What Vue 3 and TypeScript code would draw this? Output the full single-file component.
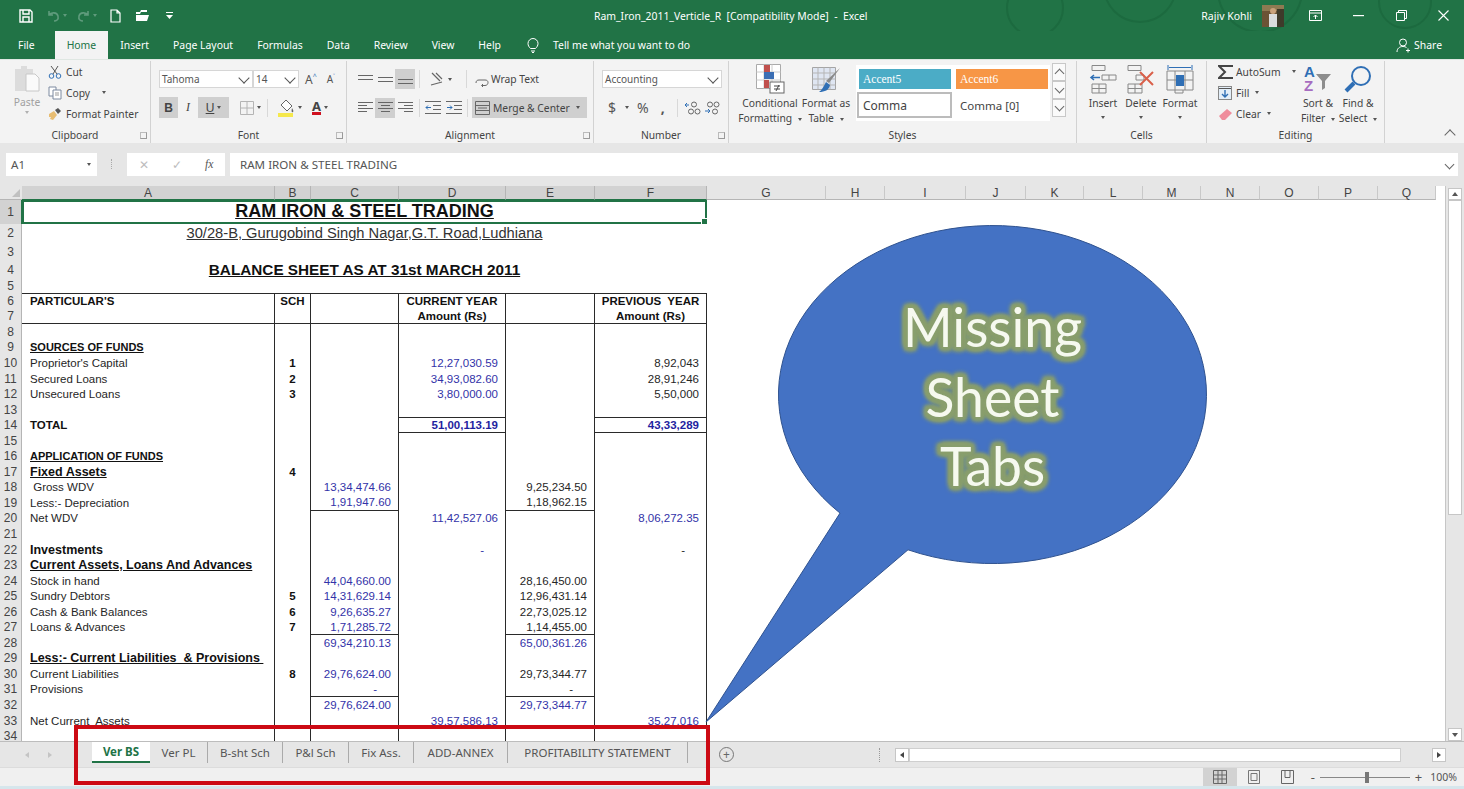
<script setup lang="ts">
import { computed } from 'vue'

type Col = 'a' | 'b' | 'c' | 'd' | 'e' | 'f'

interface Row {
  n: number
  h?: number
  title?: string
  titleClass?: string
  a?: string
  aClass?: string
  b?: string
  c?: string
  d?: string
  e?: string
  f?: string
  head?: boolean
  top?: boolean
  bottom?: boolean
  blue?: Col[]
  under?: Col[]
  boxed?: Col[]
  dash?: Col[]
}

const columns = [
  ['A', 253], ['B', 36], ['C', 88], ['D', 107], ['E', 89], ['F', 112],
  ['G', 119], ['H', 59], ['I', 81], ['J', 60], ['K', 58], ['L', 59],
  ['M', 58], ['N', 59], ['O', 59], ['P', 59], ['Q', 58],
] as const

const rows: Row[] = [
  { n: 1, h: 23.5, title: 'RAM IRON & STEEL TRADING', titleClass: 't-main' },
  { n: 2, h: 19.5, title: '30/28-B, Gurugobind Singh Nagar,G.T. Road,Ludhiana', titleClass: 't-sub' },
  { n: 3, h: 17 },
  { n: 4, h: 19, title: 'BALANCE SHEET AS AT 31st MARCH 2011', titleClass: 't-sheet' },
  { n: 5, h: 14 },
  { n: 6, a: "PARTICULAR'S", aClass: 'bold', b: 'SCH', d: 'CURRENT YEAR', f: 'PREVIOUS  YEAR', head: true, top: true },
  { n: 7, d: 'Amount (Rs)', f: 'Amount (Rs)', head: true, bottom: true },
  { n: 8 },
  { n: 9, a: 'SOURCES OF FUNDS', aClass: 'bold under caps' },
  { n: 10, a: "Proprietor's Capital", b: '1', d: '12,27,030.59', f: '8,92,043' },
  { n: 11, a: 'Secured Loans', b: '2', d: '34,93,082.60', f: '28,91,246' },
  { n: 12, a: 'Unsecured Loans', b: '3', d: '3,80,000.00', f: '5,50,000' },
  { n: 13 },
  { n: 14, a: 'TOTAL', aClass: 'bold', d: '51,00,113.19', f: '43,33,289', blue: ['f'], boxed: ['d', 'f'] },
  { n: 15 },
  { n: 16, a: 'APPLICATION OF FUNDS', aClass: 'bold under caps' },
  { n: 17, a: 'Fixed Assets', aClass: 'bold under mixed', b: '4' },
  { n: 18, a: ' Gross WDV', aClass: 'indent', c: '13,34,474.66', e: '9,25,234.50' },
  { n: 19, a: 'Less:- Depreciation', c: '1,91,947.60', e: '1,18,962.15', under: ['c', 'e'] },
  { n: 20, a: 'Net WDV', d: '11,42,527.06', f: '8,06,272.35', blue: ['f'] },
  { n: 21 },
  { n: 22, a: 'Investments', aClass: 'bold mixed', d: '-', f: '-', dash: ['d', 'f'] },
  { n: 23, a: 'Current Assets, Loans And Advances', aClass: 'bold under mixed' },
  { n: 24, a: 'Stock in hand', c: '44,04,660.00', e: '28,16,450.00' },
  { n: 25, a: 'Sundry Debtors', b: '5', c: '14,31,629.14', e: '12,96,431.14' },
  { n: 26, a: 'Cash & Bank Balances', b: '6', c: '9,26,635.27', e: '22,73,025.12' },
  { n: 27, a: 'Loans & Advances', b: '7', c: '1,71,285.72', e: '1,14,455.00', under: ['c', 'e'] },
  { n: 28, c: '69,34,210.13', e: '65,00,361.26', blue: ['e'] },
  { n: 29, a: 'Less:- Current Liabilities  & Provisions ', aClass: 'bold under mixed' },
  { n: 30, a: 'Current Liabilities', b: '8', c: '29,76,624.00', e: '29,73,344.77' },
  { n: 31, a: 'Provisions', c: '-', e: '-', dash: ['c', 'e'], under: ['c', 'e'] },
  { n: 32, c: '29,76,624.00', e: '29,73,344.77', blue: ['e'] },
  { n: 33, a: 'Net Current  Assets', d: '39,57,586.13', f: '35,27,016', blue: ['f'] },
  { n: 34 },
]

const gridStyle = computed(() => ({
  gridTemplateColumns: ['22px', ...columns.map(c => `${c[1]}px`)].join(' '),
  gridTemplateRows: ['14px', ...rows.map(r => `${r.h ?? 15.55}px`)].join(' '),
}))

const cols: Col[] = ['a', 'b', 'c', 'd', 'e', 'f']

function cellClass(row: Row, col: Col) {
  const isNum = col !== 'a' && col !== 'b'
  return [
    `col-${col}`,
    col === 'a' ? row.aClass : '',
    {
      head: row.head && col !== 'a',
      num: isNum && !row.head,
      sch: col === 'b',
      blue: (col === 'c' || col === 'd') || row.blue?.includes(col),
      'line-top': row.top,
      'line-bottom': row.bottom || row.under?.includes(col),
      boxed: row.boxed?.includes(col),
      dash: row.dash?.includes(col),
    },
  ]
}

const tabs = ['Ver BS', 'Ver PL', 'B-sht Sch', 'P&l Sch', 'Fix Ass.', 'ADD-ANNEX', 'PROFITABILITY STATEMENT']
const ribbonTabs = ['Insert', 'Page Layout', 'Formulas', 'Data', 'Review', 'View', 'Help']
</script>

<template>
  <div class="excel">
    <header class="titlebar">
      <svg class="doodle" width="460" height="31" viewBox="0 0 460 31" fill="none">
        <circle cx="35" cy="8" r="28" />
        <circle cx="140" cy="-14" r="36" />
        <circle cx="260" cy="-10" r="42" />
        <circle cx="405" cy="2" r="26" />
      </svg>
      <div class="qat">
        <svg width="14" height="14" viewBox="0 0 14 14" fill="none" stroke="#fff" stroke-width="1.4"><path d="M1 1h10l2 2v10H1zM4 1v4h6V1M4 13V8h6v5" /></svg>
        <svg class="undo" width="13" height="12" viewBox="0 0 13 12" fill="none" stroke="#5f9b7c" stroke-width="1.6"><path d="M2 1v4h4M2 5c2-3 8-3 9 1s-2 5-4 5" /></svg>
        <span class="qat-caret"></span>
        <svg class="redo" width="13" height="12" viewBox="0 0 13 12" fill="none" stroke="#5f9b7c" stroke-width="1.6"><path d="M11 1v4H7M11 5C9 2 3 2 2 6s2 5 4 5" /></svg>
        <span class="qat-caret"></span>
        <svg class="new-doc" width="11" height="14" viewBox="0 0 11 14" fill="none" stroke="#fff" stroke-width="1.2"><path d="M1 1h6l3 3v9H1zM7 1v3h3" /></svg>
        <svg class="open-doc" width="15" height="13" viewBox="0 0 15 13" fill="#fff"><path d="M1 3h4l1-2h6v2H6L5 5H1zM1 6h13l-2 6H1z" /></svg>
        <svg class="customize" width="9" height="9" viewBox="0 0 9 9" fill="#fff"><path d="M1 1h7v1H1zM1 4h7L4.500 8z" /></svg>
      </div>
      <div class="doc-title">Ram_Iron_2011_Verticle_R&nbsp; [Compatibility Mode]&nbsp; -&nbsp; Excel</div>
      <div class="win-area">
        <span class="user">Rajiv Kohli</span>
        <svg class="avatar" width="22" height="22" viewBox="0 0 22 22">
          <rect width="22" height="22" fill="#6b5335" />
          <rect x="0" y="0" width="22" height="6" fill="#8e7a52" />
          <rect x="15" y="4" width="7" height="18" fill="#3e3a2a" />
          <circle cx="11" cy="6" r="3" fill="#c9a27c" />
          <rect x="7" y="9" width="8" height="13" fill="#d9dcdd" />
        </svg>
        <svg class="win-display" width="13" height="11" viewBox="0 0 13 11" fill="none" stroke="#fff"><path d="M.5.500h12v10H.5zM.5 3h12M6.500 9V5M4.500 7l2-2 2 2" /></svg>
        <svg class="win-min" width="11" height="2" viewBox="0 0 11 2"><rect width="11" height="1.200" fill="#fff" /></svg>
        <svg class="win-max" width="11" height="11" viewBox="0 0 11 11" fill="none" stroke="#fff"><path d="M.5 2.500h8v8h-8zM2.500 2.500v-2h8v8h-2" /></svg>
        <svg class="win-close" width="11" height="11" viewBox="0 0 11 11" stroke="#fff" stroke-width="1.100"><path d="M.5.500l10 10M10.500.500l-10 10" /></svg>
      </div>
    </header>

    <nav class="ribbon-tabs">
      <span class="rtab">File</span>
      <span class="rtab active">Home</span>
      <span v-for="t in ribbonTabs" :key="t" class="rtab">{{ t }}</span>
      <svg class="bulb" width="12" height="15" viewBox="0 0 12 15" fill="none" stroke="#fff"><path d="M3.500 10.500C2 9 1 7.500 1 5.500a5 5 0 0 1 10 0c0 2-1 3.500-2.500 5zM4 13h4M5 14.500h2" /></svg>
      <span class="tell">Tell me what you want to do</span>
      <span class="share">
        <svg width="15" height="15" viewBox="0 0 15 15" fill="none" stroke="#fff"><circle cx="7" cy="4.500" r="3.500" /><path d="M1 14c0-3.500 2.500-5.500 6-5.500 1.500 0 2.500.3 3.500 1M10 12.500h4M12 10.500v4" /></svg>
        Share
      </span>
    </nav>

    <section class="ribbon">
      <div class="group g-clip">
        <div class="body clip-body">
          <div class="paste">
            <svg width="26" height="28" viewBox="0 0 26 28"><path d="M1 4h6V1h6v3h6v5h-7v17H1z" fill="#dcdcdc" /><path d="M12 9h9l4 4v13H12z" fill="#fafafa" stroke="#c8c8c8" /></svg>
            <span class="muted">Paste</span>
            <span class="mini-caret"></span>
          </div>
          <div class="clip-list">
            <div class="clip-row">
              <svg width="14" height="14" viewBox="0 0 14 14" fill="none" stroke="#555"><path d="M3 1l6 8M10 1L5 9" /><circle cx="3.500" cy="11" r="2.300" stroke="#2f6fb5" /><circle cx="10.500" cy="11" r="2.300" stroke="#2f6fb5" /></svg>
              Cut
            </div>
            <div class="clip-row">
              <svg width="14" height="14" viewBox="0 0 14 14" fill="#fff" stroke="#7c8aa0"><path d="M1 1h7v9H1z" /><path d="M5 4h8v9H5z" /><path d="M7 7h4M7 9h4" stroke="#999" /></svg>
              Copy <span class="mini-caret inline sp"></span>
            </div>
            <div class="clip-row">
              <svg width="14" height="14" viewBox="0 0 14 14"><path d="M1 7l5-3 3 4-4 5-3-1 1-2-2 0z" fill="#e8bd72" /><path d="M7 3l3-2 3 3-3 3z" fill="#555" /></svg>
              Format Painter
            </div>
          </div>
        </div>
        <div class="glabel">Clipboard</div>
        <span class="launcher"></span>
      </div>

      <div class="group g-font">
        <div class="body stack">
          <div class="tool-row">
            <div class="combo font-name">Tahoma<i class="chev"></i></div>
            <div class="combo font-size">14<i class="chev"></i></div>
            <span class="grow-a">A<sup>^</sup></span>
            <span class="shrink-a">A<sup>˅</sup></span>
          </div>
          <div class="tool-row second">
            <span class="tb b-btn pressed">B</span>
            <span class="tb i-btn">I</span>
            <span class="tb u-btn pressed"><u>U</u><span class="mini-caret inline"></span></span>
            <svg class="borders" width="14" height="14" viewBox="0 0 14 14" fill="none" stroke="#b4b4b4"><path d="M.5.500h13v13H.5zM7 .5v13M.5 7h13" /></svg>
            <span class="mini-caret inline"></span>
            <span class="vline"></span>
            <svg class="fill" width="17" height="18" viewBox="0 0 17 18"><path d="M8 1l6 6-5 5-6-6z" fill="#fff" stroke="#666" /><path d="M14 9c1 2 2 3 1 4s-2 0-1-4z" fill="#666" /><rect y="14" width="15" height="4" fill="#f5e84c" /></svg>
            <span class="mini-caret inline"></span>
            <span class="font-color">A</span>
            <span class="mini-caret inline"></span>
          </div>
        </div>
        <div class="glabel">Font</div>
        <span class="launcher"></span>
      </div>

      <div class="group g-align">
        <div class="body stack">
          <div class="tool-row">
            <span class="al"><svg width="15" height="9" viewBox="0 0 15 9" stroke="#666"><path d="M0 .5h15M0 4.500h15" /></svg></span>
            <span class="al"><svg width="15" height="9" viewBox="0 0 15 9" stroke="#666"><path d="M0 2.500h15M0 6.500h15" /></svg></span>
            <span class="al pressed"><svg width="15" height="9" viewBox="0 0 15 9" stroke="#666"><path d="M0 4.500h15M0 8.500h15" /></svg></span>
            <span class="vline sep4"></span>
            <svg class="orient" width="15" height="15" viewBox="0 0 15 15" fill="none" stroke="#666"><path d="M2 1l8 8M6 1l6 6M1 13l11-3" stroke-width="1.200" /></svg>
            <span class="mini-caret inline"></span>
            <span class="vline wide"></span>
            <svg class="wrap-ic" width="14" height="15" viewBox="0 0 14 15" fill="none" stroke="#666"><path d="M1 11c0-2 1-3 3-3h6c2 0 3 1 3 2.500s-1 3-3 3H7M8 12l-1.500 1.500L8 15" /></svg>
            <span class="txt">Wrap Text</span>
          </div>
          <div class="tool-row second">
            <span class="al"><svg width="15" height="11" viewBox="0 0 15 11" stroke="#666"><path d="M0 .5h15M0 3.500h9M0 6.500h15M0 9.500h9" /></svg></span>
            <span class="al pressed"><svg width="15" height="11" viewBox="0 0 15 11" stroke="#666"><path d="M0 .5h15M3 3.500h9M0 6.500h15M3 9.500h9" /></svg></span>
            <span class="al"><svg width="15" height="11" viewBox="0 0 15 11" stroke="#666"><path d="M0 .5h15M6 3.500h9M0 6.500h15M6 9.500h9" /></svg></span>
            <span class="vline sep4"></span>
            <svg class="ind" width="16" height="13" viewBox="0 0 16 13" fill="none" stroke="#666"><path d="M0 .5h16M8 4.500h8M8 8.500h8M0 12.500h16" /><path d="M6 6.500H1M3 4.500l-2 2 2 2" stroke="#2f6fb5" /></svg>
            <svg class="ind" width="16" height="13" viewBox="0 0 16 13" fill="none" stroke="#666"><path d="M0 .5h16M8 4.500h8M8 8.500h8M0 12.500h16" /><path d="M1 6.500h5M4 4.500l2 2-2 2" stroke="#2f6fb5" /></svg>
            <span class="vline wide2"></span>
            <span class="merge pressed">
              <svg width="15" height="14" viewBox="0 0 15 14" fill="none" stroke="#666"><path d="M.5.500h14v13H.5zM.5 4.500h14M.5 9.500h14M3 7h9" /></svg>
              Merge &amp; Center <span class="mini-caret inline"></span>
            </span>
          </div>
        </div>
        <div class="glabel">Alignment</div>
        <span class="launcher"></span>
      </div>

      <div class="group g-number">
        <div class="body stack">
          <div class="tool-row">
            <div class="combo fmt">Accounting<i class="chev"></i></div>
          </div>
          <div class="tool-row second num-tools">
            <span class="big-sym">$</span><span class="mini-caret inline dollar-caret"></span>
            <span class="big-sym pct">%</span>
            <span class="big-sym comma">,</span>
            <span class="vline num-sep"></span>
            <svg class="dec" width="16" height="14" viewBox="0 0 16 14" fill="none" stroke="#666"><path d="M4 4H0M2 2 0 4l2 2" stroke="#2f6fb5" /><circle cx="9" cy="3.500" r="2.500" /><circle cx="6" cy="10.500" r="2.500" /><circle cx="12.500" cy="10.500" r="2.500" /></svg>
            <svg class="dec next" width="16" height="14" viewBox="0 0 16 14" fill="none" stroke="#666"><circle cx="6" cy="3.500" r="2.500" /><circle cx="12.500" cy="3.500" r="2.500" /><circle cx="11" cy="10.500" r="2.500" /><path d="M1 10h5M4 8l2 2-2 2" stroke="#2f6fb5" /></svg>
          </div>
        </div>
        <div class="glabel">Number</div>
        <span class="launcher"></span>
      </div>

      <div class="group g-styles">
        <div class="body row-body">
          <div class="big cf">
            <svg width="29" height="30" viewBox="0 0 29 30">
              <path d="M.5.500h24v24H.5z" fill="#fff" stroke="#aaa" />
              <path d="M8 .5v24M16 .5v24M.5 8h24M.5 16h24" stroke="#ccc" />
              <rect x="8" y="1" width="6" height="7" fill="#c0504d" />
              <rect x="8" y="8" width="10" height="7" fill="#3c6fb4" />
              <rect x="8" y="16" width="5" height="8" fill="#c0504d" />
              <rect x="14" y="18" width="14" height="11" fill="#fff" stroke="#666" />
              <path d="M18 22h6M18 25h6M20 27l3-6" stroke="#444" fill="none" />
            </svg>
            <span>Conditional</span>
            <span>Formatting <i class="mini-caret inline"></i></span>
          </div>
          <div class="big ft">
            <svg width="29" height="30" viewBox="0 0 29 30">
              <path d="M.5 3.500h23v22H.5z" fill="#dfe6f2" stroke="#a5a5a5" />
              <path d="M6 3.500v22M12 3.500v22M18 3.500v22M.5 9h23M.5 15h23M.5 21h23" stroke="#b5b5b5" />
              <path d="M28 4 17 19l-3-2z" fill="#8a8a8a" />
              <path d="M14 18l4 3c-1 5-5 7-11 7 3-2 5-6 7-10z" fill="#2f6fb5" />
            </svg>
            <span>Format as</span>
            <span>Table <i class="mini-caret inline"></i></span>
          </div>
          <div class="gallery">
            <div class="swatch accent5">Accent5</div>
            <div class="swatch accent6">Accent6</div>
            <div class="swatch comma-cell">Comma</div>
            <div class="swatch comma0">Comma [0]</div>
          </div>
          <div class="gal-scroll">
            <span><i class="gc up"></i></span>
            <span><i class="gc"></i></span>
            <span class="more"><i class="gc"></i></span>
          </div>
        </div>
        <div class="glabel">Styles</div>
      </div>

      <div class="group g-cells">
        <div class="body row-body">
          <div class="big cell-btn">
            <svg width="30" height="30" viewBox="0 0 30 30" fill="none" stroke="#888">
              <path d="M4 1.500h13v5H4zM4 20h14v9H4zM11 20v9M4 24.500h14M14 11h14v5H14zM21 11v5" />
              <path d="M12 13.500H3M6 11l-3 2.500L6 16" stroke="#2f6fb5" stroke-width="1.500" />
            </svg>
            <span>Insert</span>
            <i class="mini-caret"></i>
          </div>
          <div class="big cell-btn">
            <svg width="30" height="30" viewBox="0 0 30 30" fill="none" stroke="#888">
              <path d="M2 1.500h13v5H2zM2 20h14v9H2zM9 20v9M2 24.500h14M10 11h8v5h-8z" />
              <path d="M14 8l13 13M27 8 14 21" stroke="#d9604a" stroke-width="2" />
            </svg>
            <span>Delete</span>
            <i class="mini-caret"></i>
          </div>
          <div class="big cell-btn fmt-btn">
            <svg width="30" height="30" viewBox="0 0 30 30" fill="none" stroke="#888">
              <path d="M3 1v5M27 1v5M4 3.500h22" stroke="#2f6fb5" />
              <path d="M2 7h26v19H2zM10 7v19M20 7v19M2 16h26" />
              <rect x="11" y="11" width="8" height="11" fill="#2f6fb5" stroke="none" />
              <path d="M10 26v3h8v-3" />
            </svg>
            <span>Format</span>
            <i class="mini-caret"></i>
          </div>
        </div>
        <div class="glabel">Cells</div>
      </div>

      <div class="group g-edit">
        <div class="body row-body">
          <div class="edit-list">
            <div class="clip-row">
              <svg width="15" height="14" viewBox="0 0 15 14" fill="none" stroke="#444" stroke-width="2"><path d="M14 2V1H1l6 6-6 6h13v-1" /></svg>
              AutoSum <span class="mini-caret inline sp"></span>
            </div>
            <div class="clip-row">
              <svg width="15" height="14" viewBox="0 0 15 14" fill="none"><rect x=".5" y=".5" width="13" height="13" fill="#e3eef8" stroke="#888" /><path d="M7 4v7M4 8l3 3 3-3" stroke="#2f6fb5" stroke-width="1.400" /><path d="M1 2.500h12" stroke="#555" /></svg>
              Fill <span class="mini-caret inline"></span>
            </div>
            <div class="clip-row">
              <svg width="15" height="14" viewBox="0 0 15 14"><path d="M1 9l8-7 5 4-7 7H4z" fill="#ef8d9c" /></svg>
              Clear <span class="mini-caret inline"></span>
            </div>
          </div>
          <div class="big sort-btn">
            <svg width="30" height="30" viewBox="0 0 30 30" fill="none">
              <text x="1" y="13" class="az a-l">A</text>
              <text x="1" y="27" class="az z-l">Z</text>
              <path d="M13 10h15l-6 7v7l-3 2v-9z" fill="#8d8d8d" />
            </svg>
            <span>Sort &amp;</span>
            <span>Filter <i class="mini-caret inline"></i></span>
          </div>
          <div class="big sort-btn">
            <svg width="30" height="30" viewBox="0 0 30 30" fill="none" stroke="#2f6fb5">
              <circle cx="18" cy="12" r="9" stroke-width="2" />
              <path d="M11 19l-8 8" stroke-width="4" />
            </svg>
            <span>Find &amp;</span>
            <span>Select <i class="mini-caret inline"></i></span>
          </div>
        </div>
        <div class="glabel">Editing</div>
      </div>

      <i class="collapse"></i>
    </section>

    <section class="formula-bar">
      <div class="name-box">A1<span class="mini-caret inline end"></span></div>
      <span class="grip"></span>
      <div class="fx-box">
        <span class="fx-x">✕</span>
        <span class="fx-ok">✓</span>
        <span class="fx-f">fx</span>
      </div>
      <div class="formula">RAM IRON &amp; STEEL TRADING<i class="gc small"></i></div>
    </section>

    <section class="sheet-area">
      <div class="sheet" :style="gridStyle">
        <div class="corner"><span></span></div>
        <div
          v-for="(c, i) in columns"
          :key="c[0]"
          class="col-head"
          :class="{ selected: i < 6 }"
        >{{ c[0] }}</div>

        <div v-for="row in rows" :key="row.n" class="row">
          <div class="row-head" :class="{ selected: row.n === 1 }">{{ row.n }}</div>
          <div v-if="row.n < 6" class="title-cell" :class="row.titleClass">
            <span>{{ row.title }}</span>
          </div>
          <template v-else>
            <div v-for="col in cols" :key="col" class="cell" :class="cellClass(row, col)">
              <span>{{ row[col] }}</span>
            </div>
          </template>
          <div class="rest"></div>
        </div>
      </div>
      <div class="vscroll">
        <span class="vbtn"><i class="tri up"></i></span>
        <span class="vthumb"></span>
        <span class="vbtn last"><i class="tri"></i></span>
      </div>
    </section>

    <section class="tab-bar">
      <div class="tab-nav"><i class="tnav left"></i><i class="tnav right"></i></div>
      <div class="tabs">
        <span v-for="(t, i) in tabs" :key="t" class="tab" :class="{ current: i === 0 }">{{ t }}</span>
      </div>
      <span class="add-sheet">+</span>
      <span class="tab-grip"></span>
      <div class="hscroll">
        <span class="hbtn"><i class="htri left"></i></span>
        <span class="hthumb"></span>
        <span class="htrack"></span>
        <span class="hbtn"><i class="htri right"></i></span>
      </div>
    </section>

    <footer class="status-bar">
      <span class="view on">
        <svg width="14" height="14" viewBox="0 0 14 14" fill="none" stroke="#666"><path d="M.5.500h13v13H.5zM5 .5v13M9 .5v13M.5 5h13M.5 9h13" /></svg>
      </span>
      <span class="view">
        <svg width="12" height="14" viewBox="0 0 12 14" fill="none" stroke="#777"><path d="M.5.500h11v13H.5zM3 3.500h6v7H3z" /></svg>
      </span>
      <span class="view">
        <svg width="13" height="14" viewBox="0 0 13 14" fill="none" stroke="#666"><path d="M.5.500h12v13H.5zM4 .5v7h5v-7" /></svg>
      </span>
      <span class="zoom-minus">-</span>
      <span class="slider"><i></i></span>
      <span class="zoom-plus">+</span>
      <span class="zoom-pct">100%</span>
    </footer>
    <div class="desk-strip"></div>

    <svg class="callout" width="1464" height="789" viewBox="0 0 1464 789">
      <path d="M840 513.100A214 169 0 1 1 908 549.800L706 722Z" fill="#4472c4" stroke="#2f528f" />
    </svg>
    <div class="callout-text">
      <span>Missing</span>
      <span>Sheet</span>
      <span>Tabs</span>
    </div>
    <div class="red-box"></div>
  </div>
</template>

<style scoped>
.excel {
  position: relative;
  display: flex;
  flex-direction: column;
  width: 1464px;
  height: 789px;
  overflow: hidden;
  background: #fff;
  color: #444;
  font-family: "Noto Sans", "Liberation Sans", sans-serif;
  font-size: 10.3px;
}

/* title bar */
.titlebar {
  position: relative;
  display: flex;
  align-items: center;
  height: 31px;
  flex: none;
  background: #217346;
  color: #fff;
}
.doodle {
  position: absolute;
  left: 1000px;
  top: 0;
  stroke: #1c6a3f;
  stroke-width: 2;
}
.qat {
  display: flex;
  align-items: center;
  width: 594px;
  padding-left: 19px;
  box-sizing: border-box;
  flex: none;
}
.undo { margin-left: 14px; }
.redo { margin-left: 10px; }
.new-doc { margin-left: 13px; }
.open-doc { margin-left: 14px; }
.customize { margin-left: 15px; }
.qat-caret {
  width: 0;
  height: 0;
  margin-left: 3px;
  border: 2.5px solid transparent;
  border-top: 3px solid #5f9b7c;
  border-bottom: 0;
}
.doc-title {
  position: relative;
  font-size: 10.4px;
  white-space: pre;
}
.win-area {
  position: relative;
  display: flex;
  align-items: center;
  margin-left: auto;
}
.user {
  font-size: 10.5px;
}
.avatar {
  margin-left: 10px;
}
.win-display {
  margin-left: 25px;
}
.win-min {
  margin-left: 31px;
}
.win-max {
  margin-left: 32px;
}
.win-close {
  margin: 0 15px 0 31px;
}

/* ribbon tabs */
.ribbon-tabs {
  display: flex;
  align-items: center;
  height: 28px;
  flex: none;
  padding-left: 6px;
  background: #217346;
  color: #fff;
  font-size: 10.4px;
}
.rtab {
  display: flex;
  align-items: center;
  height: 100%;
  padding: 0 12px;
}
.rtab.active {
  margin-left: 8px;
  background: #f3f3f3;
  color: #217346;
}
.bulb {
  margin-left: 14px;
}
.tell {
  margin-left: 14px;
}
.share {
  display: flex;
  align-items: center;
  gap: 3px;
  margin-left: auto;
  margin-right: 22px;
}

/* ribbon */
.ribbon {
  position: relative;
  display: flex;
  height: 84px;
  flex: none;
  background: #f3f3f3;
  border-top: 1px solid #dfe7e2;
  box-sizing: border-box;
}
.group {
  position: relative;
  display: flex;
  flex-direction: column;
  flex: none;
  box-sizing: border-box;
  border-right: 1px solid #d2d2d2;
  height: 82px;
  margin-top: 1px;
}
.g-clip { width: 151px; }
.g-font { width: 196px; }
.g-align { width: 247px; }
.g-number { width: 135px; }
.g-styles { width: 348px; }
.g-cells { width: 130px; }
.g-edit { width: 178px; }
.body {
  flex: 1;
  min-height: 0;
}
.glabel {
  height: 15px;
  line-height: 15px;
  text-align: center;
  color: #444;
}
.launcher {
  position: absolute;
  right: 3px;
  bottom: 4px;
  width: 5px;
  height: 5px;
  border: 1px solid #999;
  border-top-color: #bbb;
  border-left-color: #bbb;
}
.mini-caret {
  display: inline-block;
  width: 0;
  height: 0;
  border: 2.5px solid transparent;
  border-top: 3px solid #555;
  border-bottom: 0;
}
.mini-caret.inline {
  margin-left: 3px;
  vertical-align: middle;
}
.mini-caret.sp {
  margin-left: 8px;
}
.clip-body {
  display: flex;
}
.paste {
  display: flex;
  flex-direction: column;
  align-items: center;
  width: 48px;
  padding: 4px 0 0 6px;
  box-sizing: border-box;
  gap: 2px;
}
.paste .muted {
  color: #a0a0a0;
}
.paste .mini-caret {
  border-top-color: #b0b0b0;
}
.clip-list,
.edit-list {
  display: flex;
  flex-direction: column;
}
.clip-row {
  display: flex;
  align-items: center;
  gap: 4px;
  height: 21px;
  white-space: nowrap;
}
.stack {
  display: flex;
  flex-direction: column;
  padding: 9px 0 0 8px;
}
.tool-row {
  display: flex;
  align-items: center;
  height: 18px;
}
.tool-row.second {
  height: 21px;
  margin-top: 9px;
}
.combo {
  position: relative;
  display: flex;
  align-items: center;
  height: 18px;
  padding-left: 2px;
  box-sizing: border-box;
  background: #fff;
  border: 1px solid #d6d6d6;
  color: #555;
  font-size: 10px;
}
.chev {
  position: absolute;
  right: 4px;
  top: 3px;
  width: 7px;
  height: 7px;
  border-right: 1px solid #555;
  border-bottom: 1px solid #555;
  transform: rotate(45deg);
}
.font-name { width: 94px; }
.font-size { width: 46px; }
.fmt { width: 120px; }
.grow-a,
.shrink-a {
  font-size: 12px;
  color: #555;
}
.grow-a { margin-left: 6px; }
.shrink-a { margin-left: 10px; font-size: 10px; }
.grow-a sup,
.shrink-a sup {
  font-size: 7px;
  line-height: 0;
  color: #2f6fb5;
}
.pressed {
  background: #cfcfcf;
}
.tb {
  display: flex;
  align-items: center;
  justify-content: center;
  height: 21px;
  font-family: "Liberation Serif", serif;
  font-size: 12px;
  color: #444;
}
.b-btn {
  width: 19px;
  font-family: "Liberation Sans", sans-serif;
  font-weight: 700;
}
.i-btn {
  width: 20px;
  font-style: italic;
}
.u-btn {
  width: 31px;
  font-family: "Liberation Sans", sans-serif;
}
.borders {
  margin-left: 11px;
}
.vline {
  display: inline-block;
  width: 1px;
  height: 18px;
  margin: 0 6px;
  background: #d8d8d8;
  flex: none;
}
.fill {
  margin-left: 4px;
}
.font-color {
  margin-left: 10px;
  font-size: 13px;
  font-weight: 700;
  line-height: 12px;
  color: #444;
  border-bottom: 3px solid #d0101e;
}
.al {
  display: flex;
  align-items: center;
  justify-content: center;
  width: 20px;
  height: 20px;
}
.vline.sep4 {
  margin: 0 0 0 4px;
}
.orient {
  margin-left: 10px;
}
.vline.wide {
  margin: 0 8px 0 14px;
}
.wrap-ic {
  margin-right: 2px;
}
.txt {
  color: #444;
}
.ind {
  margin-left: 5px;
  flex: none;
}
.vline.wide2 {
  margin: 0 4px 0 5px;
}
.merge {
  display: flex;
  align-items: center;
  gap: 3px;
  height: 21px;
  width: 115px;
  padding-left: 3px;
  box-sizing: border-box;
  white-space: nowrap;
}
.num-tools {
  padding-left: 6px;
}
.big-sym {
  font-size: 14px;
  color: #555;
}
.mini-caret.dollar-caret { margin-left: 9px; }
.pct { margin-left: 8px; }
.comma { margin-left: 12px; font-weight: 700; }
.vline.num-sep { margin: 0 7px 0 12px; }
.dec.next { margin-left: 3px; }
.row-body {
  display: flex;
}
.big {
  display: flex;
  flex-direction: column;
  align-items: center;
  flex: none;
  line-height: 15px;
  padding-top: 3px;
  box-sizing: border-box;
  white-space: nowrap;
}
.big svg {
  margin-bottom: 2px;
}
.cf { width: 62px; margin-left: 10px; }
.ft { width: 50px; }
.big .mini-caret {
  margin-top: 5px;
}
.big span .mini-caret {
  margin-top: 0;
}
.gallery {
  display: grid;
  grid-template-columns: 97px 97px;
  grid-template-rows: 27px 26px;
  width: 194px;
  height: 56px;
  margin: 4px 0 0 5px;
  padding-left: 1px;
  background: #fff;
  box-sizing: border-box;
}
.swatch {
  display: flex;
  align-items: center;
  font-size: 11.5px;
  white-space: nowrap;
}
.accent5,
.accent6 {
  height: 20px;
  margin: 4px 3px 0 2px;
  padding-left: 4px;
  color: #fff;
  font-family: "Liberation Serif", serif;
  font-size: 11.5px;
}
.accent5 { background: #4bacc6; }
.accent6 { background: #f79646; }
.comma-cell {
  margin: 0 2px 0 0;
  padding-left: 4px;
  border: 2px solid #bcbcbc;
  font-size: 12px;
}
.comma0 {
  padding-left: 6px;
}
.gal-scroll {
  display: flex;
  flex-direction: column;
  width: 14px;
  margin: 2px 0 0 2px;
}
.gal-scroll span {
  display: flex;
  align-items: center;
  justify-content: center;
  height: 18px;
  background: #fafafa;
  border: 1px solid #c8c8c8;
  box-sizing: border-box;
}
.gc {
  width: 6px;
  height: 6px;
  margin-top: -3px;
  border-right: 1px solid #666;
  border-bottom: 1px solid #666;
  transform: rotate(45deg);
}
.gc.up {
  margin-top: 3px;
  transform: rotate(225deg);
}
.cell-btn {
  width: 38px;
}
.g-cells .row-body {
  padding-left: 7px;
}
.fmt-btn {
  width: 40px;
}
.edit-list {
  width: 91px;
  padding-left: 11px;
  box-sizing: border-box;
  flex: none;
}
.edit-list .clip-row {
  gap: 3px;
}
.sort-btn {
  width: 40px;
}
.az {
  font-family: "Liberation Sans", sans-serif;
  font-size: 15px;
  font-weight: 700;
}
.a-l { fill: #2f6fb5; }
.z-l { fill: #a66cc0; }
.collapse {
  position: absolute;
  right: 10px;
  bottom: 4px;
  width: 7px;
  height: 7px;
  border-left: 1px solid #666;
  border-top: 1px solid #666;
  transform: rotate(45deg);
}

/* formula bar */
.formula-bar {
  display: flex;
  height: 43px;
  flex: none;
  padding: 10px 6px 0;
  box-sizing: border-box;
  background: #e6e6e6;
  color: #555;
  font-size: 11.6px;
}
.name-box,
.fx-box,
.formula {
  display: flex;
  align-items: center;
  height: 23px;
  background: #fff;
  box-sizing: border-box;
}
.name-box {
  width: 91px;
  padding-left: 5px;
}
.mini-caret.end {
  margin-left: auto;
  margin-right: 6px;
}
.grip {
  width: 1px;
  height: 10px;
  margin: 6px 14px;
  border-left: 1px dotted #aaa;
}
.fx-box {
  width: 98px;
  gap: 23px;
  padding-left: 12px;
  margin-right: 5px;
  color: #bdbdbd;
}
.fx-f {
  font-family: "Liberation Serif", serif;
  font-style: italic;
  color: #555;
}
.formula {
  flex: 1;
  padding-left: 10px;
  position: relative;
}
.gc.small {
  position: absolute;
  right: 5px;
  top: 11px;
}

/* grid */
.sheet-area {
  display: flex;
  height: 555px;
  flex: none;
  overflow: hidden;
  background: #e6e6e6;
}
.sheet {
  display: grid;
  width: 1446px;
  height: 555px;
  flex: none;
  background: #fff;
  border-right: 1px solid #c6c6c6;
  box-sizing: border-box;
  align-content: start;
  overflow: hidden;
  font-family: "Liberation Sans", sans-serif;
  font-size: 11.5px;
  color: #262626;
}
.row {
  display: contents;
}
.rest {
  grid-column: span 11;
}
.corner {
  position: relative;
  background: #e6e6e6;
  border-bottom: 1px solid #b5b5b5;
}
.corner span {
  position: absolute;
  right: 2px;
  bottom: 2px;
  border: 4px solid transparent;
  border-right-color: #c0c0c0;
  border-bottom-color: #c0c0c0;
}
.col-head {
  display: flex;
  align-items: center;
  justify-content: center;
  background: #e6e6e6;
  border-right: 1px solid #c8c8c8;
  border-bottom: 1px solid #b5b5b5;
  box-sizing: border-box;
  color: #444;
  font-size: 12px;
  line-height: 1;
}
.col-head.selected {
  background: #d2d2d2;
  border-right-color: #b5b5b5;
  border-bottom: 1px solid #217346;
}
.row-head {
  display: flex;
  align-items: center;
  justify-content: center;
  background: #e6e6e6;
  border-right: 1px solid #b5b5b5;
  box-sizing: border-box;
  color: #444;
  font-size: 12px;
}
.row-head.selected {
  background: #d2d2d2;
  border-right: 1px solid #217346;
}
.title-cell {
  grid-column: span 6;
  display: flex;
  align-items: center;
  justify-content: center;
  box-sizing: border-box;
  color: #111;
  text-decoration: underline;
  white-space: pre;
}
.t-main {
  position: relative;
  border: 2px solid #217346;
  font-size: 18px;
  font-weight: 700;
}
.t-main::after {
  content: "";
  position: absolute;
  right: -3px;
  bottom: -3px;
  width: 5px;
  height: 5px;
  background: #217346;
  border: 1px solid #fff;
}
.t-sub {
  font-size: 14.7px;
  color: #333;
}
.t-sheet {
  font-size: 15.3px;
  font-weight: 700;
}
.cell {
  display: flex;
  align-items: center;
  min-width: 0;
  padding: 0 7px;
  box-sizing: border-box;
  border-right: 1px solid #2a2a2a;
  white-space: pre;
}
.col-a {
  padding-left: 8px;
  border-left: 0;
}
.bold {
  font-weight: 700;
  color: #111;
}
.caps {
  font-size: 11px;
}
.mixed {
  font-size: 12.5px;
}
.col-a.under span {
  text-decoration: underline;
}
.indent {
  padding-left: 8px;
}
.sch {
  justify-content: center;
  padding: 0;
  font-weight: 700;
  color: #111;
}
.num {
  justify-content: flex-end;
}
.head {
  justify-content: center;
  font-weight: 700;
  color: #111;
}
.blue {
  color: #3232a8;
}
.head.blue {
  color: #111;
}
.line-top {
  border-top: 1px solid #2a2a2a;
}
.line-bottom {
  border-bottom: 1px solid #2a2a2a;
}
.boxed {
  border-top: 1px solid #2a2a2a;
  border-bottom: 1px solid #2a2a2a;
  font-weight: 700;
  color: #1f1fa0;
}
.dash {
  padding-right: 21px;
}

.vscroll {
  display: flex;
  flex-direction: column;
  align-items: center;
  width: 18px;
  padding-top: 2px;
  box-sizing: border-box;
}
.vbtn {
  display: flex;
  align-items: center;
  justify-content: center;
  width: 14px;
  height: 12px;
  flex: none;
  background: #fff;
  border: 1px solid #c6c6c6;
  box-sizing: border-box;
}
.vbtn.last {
  margin-top: auto;
  height: 13px;
}
.vthumb {
  width: 14px;
  height: 315px;
  flex: none;
  background: #fff;
  border: 1px solid #c6c6c6;
  box-sizing: border-box;
}
.tri {
  border: 3px solid transparent;
  border-top: 4px solid #555;
  border-bottom: 0;
}
.tri.up {
  border-top: 0;
  border-bottom: 4px solid #555;
}

/* sheet tabs */
.tab-bar {
  display: flex;
  align-items: center;
  height: 26px;
  flex: none;
  background: #e6e6e6;
  border-top: 1px solid #bdbdbd;
  box-sizing: border-box;
}
.tab-nav {
  display: flex;
  align-items: center;
  gap: 19px;
  width: 92px;
  padding-left: 25px;
  box-sizing: border-box;
  flex: none;
}
.tnav {
  border: 3px solid transparent;
}
.tnav.left {
  border-left: 0;
  border-right: 4px solid #c4c4c4;
}
.tnav.right {
  border-right: 0;
  border-left: 4px solid #c4c4c4;
}
.tabs {
  display: grid;
  grid-template-columns: 58px 58px 75px 66px 65px 94px 180px;
  height: 100%;
  flex: none;
}
.tab {
  display: flex;
  align-items: center;
  justify-content: center;
  height: 21px;
  border-right: 1px solid #aaa;
  box-sizing: border-box;
  color: #555;
  font-size: 11.5px;
  white-space: nowrap;
}
.tab.current {
  background: #fff;
  border-right: 0;
  border-bottom: 2px solid #217346;
  color: #217346;
  font-weight: 700;
}
.add-sheet {
  display: flex;
  align-items: center;
  justify-content: center;
  width: 13px;
  height: 13px;
  margin-left: 31px;
  border: 1px solid #777;
  border-radius: 50%;
  color: #666;
  font-size: 12px;
  line-height: 1;
}
.tab-grip {
  height: 14px;
  margin-left: 145px;
  border-left: 1px dotted #999;
}
.hscroll {
  display: flex;
  align-items: center;
  height: 14px;
  margin-left: 15px;
}
.hbtn {
  display: flex;
  align-items: center;
  justify-content: center;
  width: 14px;
  height: 14px;
  background: #fff;
  border: 1px solid #c6c6c6;
  box-sizing: border-box;
}
.hthumb {
  width: 492px;
  height: 14px;
  background: #fff;
  border: 1px solid #cfcfcf;
  box-sizing: border-box;
}
.htrack {
  width: 31px;
}
.htri {
  border: 3px solid transparent;
}
.htri.left {
  border-left: 0;
  border-right: 4px solid #444;
}
.htri.right {
  border-right: 0;
  border-left: 4px solid #444;
}

/* status bar */
.status-bar {
  display: flex;
  align-items: center;
  justify-content: flex-end;
  height: 19px;
  flex: none;
  padding-right: 7px;
  background: #f0f0f0;
  border-top: 1px solid #dcdcdc;
  box-sizing: border-box;
  color: #555;
  font-size: 10.5px;
}
.view {
  display: flex;
  align-items: center;
  justify-content: center;
  width: 34px;
  height: 100%;
}
.view.on {
  background: #d2d2d2;
}
.zoom-minus {
  margin-left: 6px;
  font-size: 13px;
}
.slider {
  position: relative;
  width: 90px;
  height: 1px;
  margin: 0 5px;
  background: #888;
}
.slider i {
  position: absolute;
  left: 45px;
  top: -5px;
  width: 4px;
  height: 11px;
  background: #777;
}
.zoom-plus {
  font-size: 13px;
}
.zoom-pct {
  margin-left: 8px;
}
.desk-strip {
  flex: 1;
  background: #d6e6ec;
}

/* overlays */
.callout {
  position: absolute;
  left: 0;
  top: 0;
  pointer-events: none;
}
.callout-text {
  position: absolute;
  left: 778px;
  top: 292px;
  width: 429px;
  display: flex;
  flex-direction: column;
  align-items: center;
  color: #f6f9ef;
  font-family: Lato, "Open Sans", sans-serif;
  font-size: 53.5px;
  line-height: 69.5px;
  text-shadow:
    0 0 2px #8a9f6e, 0 0 3px #8a9f6e,
    3px 0 3px #8a9f6e, -3px 0 3px #8a9f6e, 0 3px 3px #8a9f6e, 0 -3px 3px #8a9f6e,
    3px 3px 3px #8a9f6e, -3px 3px 3px #8a9f6e, 3px -3px 3px #8a9f6e, -3px -3px 3px #8a9f6e,
    5px 0 4px #8a9f6e, -5px 0 4px #8a9f6e, 0 5px 4px #8a9f6e, 0 -5px 4px #8a9f6e,
    4px 4px 4px #8a9f6e, -4px 4px 4px #8a9f6e, 4px -4px 4px #8a9f6e, -4px -4px 4px #8a9f6e;
}
.red-box {
  position: absolute;
  left: 74px;
  top: 725px;
  width: 636px;
  height: 60px;
  box-sizing: border-box;
  border: 4px solid #cc0a14;
}
</style>

<style>
html,
body {
  margin: 0;
  overflow: hidden;
}
</style>
